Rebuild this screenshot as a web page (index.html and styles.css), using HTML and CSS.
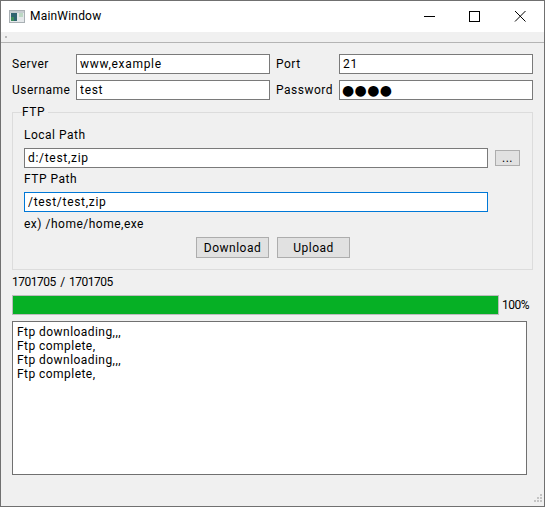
FILE: index.html
```html
<!DOCTYPE html>
<html lang="en">
<head>
  <meta charset="UTF-8" />
  <title>MainWindow</title>
  <link rel="stylesheet" href="styles.css">
</head>
<body>
  <div class="window">
    <div class="titlebar">
      <svg class="app-icon" width="16" height="14" viewBox="0 0 16 14">
        <rect x="0.5" y="0.5" width="15" height="12" fill="#e4e8ea" stroke="#a9b0b4"/>
        <rect x="1" y="1" width="14" height="2" fill="#c5ccd0"/>
        <rect x="2" y="3" width="6" height="8" fill="#2f6470"/>
        <rect x="2" y="7" width="3" height="4" fill="#3c8a5a"/>
        <rect x="10" y="3" width="4" height="4" fill="#bcd8c4"/>
      </svg>
      <span class="title">MainWindow</span>
      <div class="controls">
        <svg class="ctl" width="46" height="31" viewBox="0 0 46 31"><path d="M18 15.500h11" stroke="#000" fill="none"/></svg>
        <svg class="ctl" width="46" height="31" viewBox="0 0 46 31"><rect x="17.500" y="10.500" width="10" height="10" stroke="#000" fill="none"/></svg>
        <svg class="ctl" width="46" height="31" viewBox="0 0 46 31"><path d="M17 10l10.500 10.500M27.500 10L17 20.500" stroke="#000" fill="none"/></svg>
      </div>
    </div>
    <div class="menubar"><span class="menu-grip"></span></div>

    <div class="content">
      <div class="login">
        <label>Server</label>
        <input type="text" value="www,example" />
        <label>Port</label>
        <input type="text" value="21" />
        <label>Username</label>
        <input type="text" value="test" />
        <label>Password</label>
        <input class="secret" type="text" value="●●●●" />
      </div>

      <fieldset class="group">
        <legend>FTP</legend>
        <label class="field-label first">Local Path</label>
        <div class="path-row">
          <input class="path" type="text" value="d:/test,zip" />
          <button class="browse">...</button>
        </div>
        <label class="field-label">FTP Path</label>
        <input class="path focused" type="text" value="/test/test,zip" />
        <div class="hint">ex) /home/home,exe</div>
        <div class="actions">
          <button>Download</button>
          <button>Upload</button>
        </div>
      </fieldset>

      <div class="count">1701705 / 1701705</div>
      <div class="progress-row">
        <div class="progress"><div class="progress-fill" style="width: 100%"></div></div>
        <span class="percent">100%</span>
      </div>
      <div class="log">
        <div>Ftp downloading,,,</div>
        <div>Ftp complete,</div>
        <div>Ftp downloading,,,</div>
        <div>Ftp complete,</div>
      </div>
    </div>

    <div class="statusbar">
      <svg width="10" height="10" viewBox="0 0 10 10" fill="#c4c4c4">
        <rect x="6" y="0" width="2" height="2"/>
        <rect x="3" y="3" width="2" height="2"/>
        <rect x="6" y="3" width="2" height="2"/>
        <rect x="0" y="6" width="2" height="2"/>
        <rect x="3" y="6" width="2" height="2"/>
        <rect x="6" y="6" width="2" height="2"/>
      </svg>
    </div>
  </div>
</body>
</html>
```
FILE: styles.css
```css
* {
  box-sizing: border-box;
}

body {
  margin: 0;
  font-family: Roboto, "Noto Sans CJK KR", sans-serif;
  font-size: 12px;
  letter-spacing: 0.5px;
  color: #000;
}

.window {
  width: 545px;
  height: 507px;
  border: 1px solid #707070;
  background: #f0f0f0;
  display: flex;
  flex-direction: column;
}

.titlebar {
  height: 31px;
  background: #fff;
  display: flex;
  align-items: center;
  flex-shrink: 0;
}

.app-icon {
  margin-left: 8px;
}

.title {
  margin-left: 5px;
  margin-top: -1px;
  letter-spacing: 0.2px;
}

.controls {
  margin-left: auto;
  display: flex;
}

.ctl {
  display: block;
}

.menubar {
  height: 11px;
  border-bottom: 1px solid #b4b4b4;
  padding: 4px 0 0 4px;
  flex-shrink: 0;
}

.menu-grip {
  display: block;
  width: 2px;
  height: 2px;
  background: #b8b8b8;
}

.content {
  padding: 11px 11px 0;
}

.login {
  display: grid;
  grid-template-columns: 64px 194px 69px 194px;
  row-gap: 6px;
  align-items: center;
}

.login label:nth-child(3),
.login label:nth-child(7) {
  margin-left: 6px;
}

input {
  height: 20px;
  width: 100%;
  border: 1px solid #7a7a7a;
  background: #fff;
  padding: 0 2px 0 3px;
  font: inherit;
  letter-spacing: 0.7px;
  color: #000;
  outline: none;
}

.secret {
  font-family: "DejaVu Sans", sans-serif;
  font-size: 14px;
  letter-spacing: 0.4px;
  padding: 0 2px;
}

.group {
  margin: 4px 0 0;
  padding: 0 12px 11px 11px;
  border: 1px solid #dcdcdc;
  min-width: 0;
}

.group legend {
  margin-left: -2px;
  padding: 0 3px 0 0;
  line-height: 16px;
}

.field-label {
  display: block;
  height: 16px;
  line-height: 16px;
  margin: 3px 0 5px;
}

.field-label.first {
  margin-top: 7px;
}

.path-row {
  display: flex;
  align-items: center;
  gap: 7px;
}

.path {
  display: block;
  width: 464px;
  flex-shrink: 0;
}

.focused {
  border-color: #0078d7;
}

button {
  height: 21px;
  width: 73px;
  padding: 0;
  border: 1px solid #adadad;
  background: #e1e1e1;
  font: inherit;
  letter-spacing: inherit;
  color: #000;
}

.browse {
  width: 25px;
  height: 16px;
  line-height: 12px;
}

.hint {
  height: 16px;
  line-height: 16px;
  margin-top: 4px;
}

.actions {
  display: flex;
  justify-content: center;
  gap: 8px;
  margin-top: 5px;
  padding-left: 2px;
}

.count {
  height: 16px;
  line-height: 16px;
  margin-top: 4px;
  letter-spacing: -0.5px;
  word-spacing: 2px;
}

.progress-row {
  display: flex;
  align-items: center;
  margin-top: 5px;
}

.progress {
  width: 487px;
  height: 20px;
  border: 1px solid #bcbcbc;
  background: #e6e6e6;
}

.progress-fill {
  height: 100%;
  background: #06b025;
}

.percent {
  margin-left: 3px;
  letter-spacing: -0.5px;
}

.log {
  width: 515px;
  height: 154px;
  margin-top: 6px;
  padding: 3px 4px;
  border: 1px solid #707070;
  background: #fff;
  line-height: 14px;
  letter-spacing: 0.45px;
}

.statusbar {
  margin-top: auto;
  height: 12px;
  display: flex;
  justify-content: flex-end;
}

.statusbar svg {
  display: block;
}
```
